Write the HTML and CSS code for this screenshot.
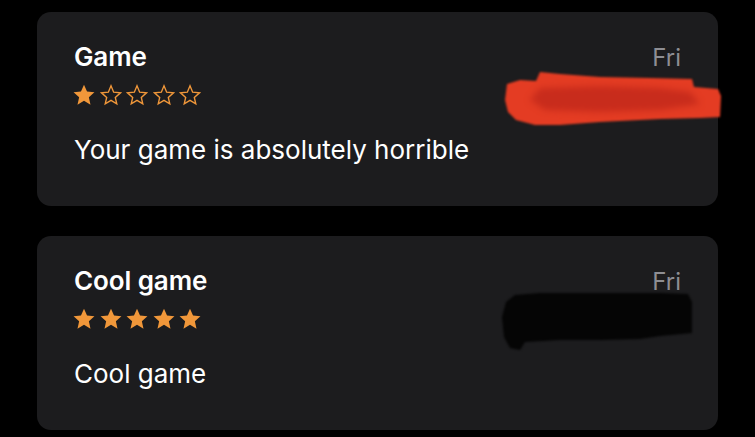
FILE: index.html
```html
<!DOCTYPE html>
<html>
<head>
<meta charset="utf-8">
<link rel="stylesheet" href="styles.css">
</head>
<body>
<div class="list">
  <div class="card">
    <div class="head">
      <div class="title">Game</div>
      <div class="date">Fri</div>
    </div>
    <div class="stars">
      <svg class="star" viewBox="0 0 24 24"><polygon class="full" points="12,0.8 15.3,8.3 23.4,9.1 17.3,14.5 19.1,22.6 12,18.4 4.9,22.6 6.7,14.5 0.6,9.1 8.7,8.3"/></svg>
      <svg class="star" viewBox="0 0 24 24"><polygon class="empty" points="12,2 14.9,8.9 22.3,9.7 16.7,14.6 18.3,21.6 12,17.8 5.7,21.6 7.3,14.6 1.7,9.7 9.1,8.9"/></svg>
      <svg class="star" viewBox="0 0 24 24"><polygon class="empty" points="12,2 14.9,8.9 22.3,9.7 16.7,14.6 18.3,21.6 12,17.8 5.7,21.6 7.3,14.6 1.7,9.7 9.1,8.9"/></svg>
      <svg class="star" viewBox="0 0 24 24"><polygon class="empty" points="12,2 14.9,8.9 22.3,9.7 16.7,14.6 18.3,21.6 12,17.8 5.7,21.6 7.3,14.6 1.7,9.7 9.1,8.9"/></svg>
      <svg class="star" viewBox="0 0 24 24"><polygon class="empty" points="12,2 14.9,8.9 22.3,9.7 16.7,14.6 18.3,21.6 12,17.8 5.7,21.6 7.3,14.6 1.7,9.7 9.1,8.9"/></svg>
    </div>
    <div class="body">Your game is absolutely horrible</div>
    <svg class="redact redact-red" viewBox="497 62 240 80">
      <polygon fill="#e43c23" points="507,84 520,80 536,81 540,72 560,74 600,77 650,78 692,79 694,87 718,89 721,96 720,117 700,118 660,119 600,122 560,125 535,125 516,120 508,112 505,100"/>
      <polygon class="inner" fill="#c82c1c" points="540,88 600,86 660,88 690,92 700,104 660,110 600,112 545,110 530,100"/>
    </svg>
  </div>
  <div class="card">
    <div class="head">
      <div class="title">Cool game</div>
      <div class="date">Fri</div>
    </div>
    <div class="stars">
      <svg class="star" viewBox="0 0 24 24"><polygon class="full" points="12,0.8 15.3,8.3 23.4,9.1 17.3,14.5 19.1,22.6 12,18.4 4.9,22.6 6.7,14.5 0.6,9.1 8.7,8.3"/></svg>
      <svg class="star" viewBox="0 0 24 24"><polygon class="full" points="12,0.8 15.3,8.3 23.4,9.1 17.3,14.5 19.1,22.6 12,18.4 4.9,22.6 6.7,14.5 0.6,9.1 8.7,8.3"/></svg>
      <svg class="star" viewBox="0 0 24 24"><polygon class="full" points="12,0.8 15.3,8.3 23.4,9.1 17.3,14.5 19.1,22.6 12,18.4 4.9,22.6 6.7,14.5 0.6,9.1 8.7,8.3"/></svg>
      <svg class="star" viewBox="0 0 24 24"><polygon class="full" points="12,0.8 15.3,8.3 23.4,9.1 17.3,14.5 19.1,22.6 12,18.4 4.9,22.6 6.7,14.5 0.6,9.1 8.7,8.3"/></svg>
      <svg class="star" viewBox="0 0 24 24"><polygon class="full" points="12,0.8 15.3,8.3 23.4,9.1 17.3,14.5 19.1,22.6 12,18.4 4.9,22.6 6.7,14.5 0.6,9.1 8.7,8.3"/></svg>
    </div>
    <div class="body">Cool game</div>
    <svg class="redact redact-black" viewBox="497 284 220 80">
      <polygon fill="#050505" points="506,300 515,293 540,291 600,291 660,291 688,292 692,300 692,331 660,334 640,337 600,338 560,338 525,340 520,348 510,346 504,335 502,315"/>
    </svg>
  </div>
</div>
</body>
</html>
```

FILE: styles.css
```css
html, body {
  margin: 0;
  padding: 0;
  background: #000;
}
body {
  font-family: Inter, "Noto Sans", sans-serif;
  color: #fff;
}
.list {
  display: flex;
  flex-direction: column;
  gap: 30px;
  padding: 12px 37px 0 37px;
  width: 681px;
}
.card {
  position: relative;
  background: #1c1c1e;
  border-radius: 14px;
  padding: 30px 37px 41px 37px;
}
.head {
  display: flex;
  justify-content: space-between;
  align-items: baseline;
  height: 30px;
}
.title {
  font-size: 26px;
  line-height: 30px;
  font-weight: 600;
  letter-spacing: -0.1px;
}
.date {
  font-size: 24px;
  line-height: 30px;
  color: #8e8e93;
}
.stars {
  display: flex;
  gap: 4.5px;
  margin-top: 12px;
  margin-left: -1px;
  height: 22px;
}
.star {
  width: 22px;
  height: 22px;
}
.star .full {
  fill: #f0973a;
}
.star .empty {
  fill: none;
  stroke: #f0973a;
  stroke-width: 1.5;
}
.body {
  margin-top: 29px;
  font-size: 26px;
  line-height: 30px;
  font-weight: 400;
}
.redact {
  position: absolute;
  left: 460px;
  top: 50px;
  width: 240px;
  height: 80px;
  filter: blur(1px);
}
.redact-red .inner {
  filter: blur(3px);
}
.redact-black {
  width: 220px;
}
```
